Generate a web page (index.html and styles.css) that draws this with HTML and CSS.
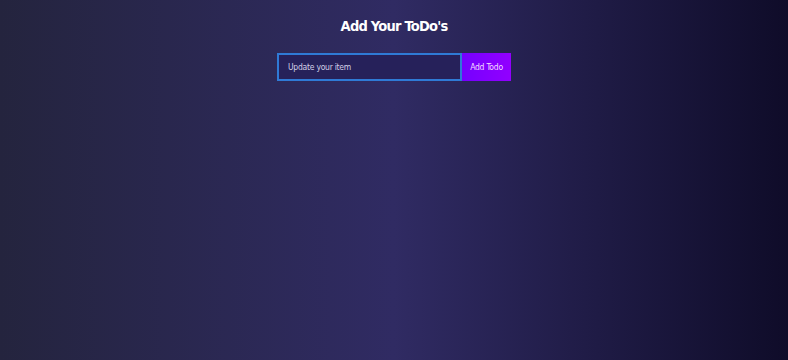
FILE: index.html
```html
<!DOCTYPE html>
<html lang="en">
<head>
    <meta charset="UTF-8">
    <meta name="viewport" content="width=device-width, initial-scale=1.0">
    <title>Todo App</title>
    <link rel="stylesheet" href="styles.css">
</head>
<body>

<div class="container">
    <h1 class="title">Add Your ToDo's</h1>
    <form class="todo-form" onsubmit="return false;">
        <input class="todo-input" type="text" placeholder="Update your item">
        <button class="todo-btn" type="submit">Add Todo</button>
    </form>
</div>

</body>
</html>
```

FILE: styles.css
```css
body {
    margin: 0;
    height: 100vh;
    background: linear-gradient(to right, #24243e, #302b63, #0f0c29);
    font-family: "DejaVu Sans Condensed", "DejaVu Sans", sans-serif;
}

.container {
    display: flex;
    flex-direction: column;
    align-items: center;
    padding-top: 17px;
}

.title {
    margin: 0 0 17px;
    color: #fff;
    font-size: 14.5px;
    font-weight: bold;
    letter-spacing: -0.75px;
    line-height: 19px;
}

.todo-form {
    display: flex;
}

.todo-input {
    width: 185px;
    height: 28px;
    box-sizing: border-box;
    padding: 0 9px;
    background-color: #26215a;
    border: 2px solid #2f7ad6;
    color: #fff;
    font-family: inherit;
    font-size: 8.5px;
    letter-spacing: -0.25px;
    outline: none;
}

.todo-input::placeholder {
    color: #d2cfe6;
}

.todo-btn {
    width: 49px;
    height: 28px;
    padding: 0;
    border: none;
    background: linear-gradient(to right, #7500ff, #9200ff);
    color: #f4dcff;
    font-family: inherit;
    font-size: 8.5px;
    letter-spacing: -0.25px;
    white-space: nowrap;
    cursor: pointer;
}
```
